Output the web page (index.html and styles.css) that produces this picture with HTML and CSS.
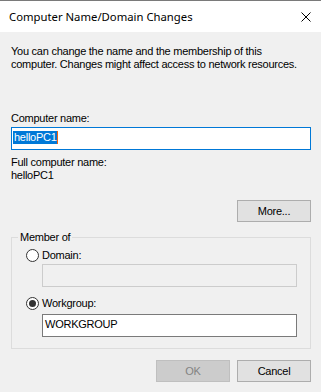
FILE: index.html
```html
<!DOCTYPE html>
<html>
<head>
<meta charset="utf-8">
<link rel="stylesheet" href="styles.css">
</head>
<body>
<div class="window">
  <div class="titlebar">
    <span class="title">Computer Name/Domain Changes</span>
    <svg class="close" width="10" height="10" viewBox="0 0 10 10"><path d="M0.5 0.5 L9.5 9.5 M9.5 0.5 L0.5 9.5" stroke="#000" stroke-width="1" fill="none"/></svg>
  </div>
  <div class="content">
    <p class="intro">You can change the name and the membership of this<br>computer. Changes might affect access to network resources.</p>
    <div class="label name-label">Computer name:</div>
    <div class="textbox focused"><span class="sel">helloPC1</span><span class="caret"></span></div>
    <div class="label full-label">Full computer name:</div>
    <div class="label full-value">helloPC1</div>
    <div class="btnrow more-row"><div class="btn">More...</div></div>
    <fieldset class="group">
      <legend>Member of</legend>
      <div class="group-inner">
        <div class="radio domain"><span class="circle"></span><span>Domain:</span></div>
        <div class="textbox disabled field-domain"></div>
        <div class="radio checked workgroup"><span class="circle"></span><span>Workgroup:</span></div>
        <div class="textbox field-workgroup">WORKGROUP</div>
      </div>
    </fieldset>
    <div class="btnrow actions"><div class="btn disabled">OK</div><div class="btn">Cancel</div></div>
  </div>
</div>
</body>
</html>
```

FILE: styles.css
```css
html, body {
  margin: 0;
  padding: 0;
  background: #f0f0f0;
}
.window {
  width: 321px;
  height: 392px;
  border-top: 1px solid #7a7a7a;
  box-sizing: border-box;
  background: #f0f0f0;
  font-family: "Liberation Sans", Arial, sans-serif;
  font-size: 11px;
  line-height: 13px;
  letter-spacing: -0.25px;
  color: #000;
}
.titlebar {
  height: 31px;
  background: #fff;
  display: flex;
  align-items: center;
  justify-content: space-between;
  padding: 1px 10px 0 9px;
  box-sizing: border-box;
}
.title {
  font-family: "Noto Sans", "Liberation Sans", sans-serif;
  font-size: 11.3px;
  letter-spacing: 0;
  line-height: 16px;
  color: #000;
}
.close {
  display: block;
  margin-top: -1px;
}
.content {
  padding: 13px 10px 0 11px;
}
.intro {
  margin: 0;
  white-space: nowrap;
}
.label {
  height: 13px;
  white-space: nowrap;
}
.name-label {
  margin-top: 41px;
}
.textbox {
  height: 23px;
  box-sizing: border-box;
  border: 1px solid #7a7a7a;
  background: #fff;
  padding: 3px 2px 0 2px;
  display: flex;
  align-items: flex-start;
}
.textbox.focused {
  margin-top: 2px;
  border-color: #0078d7;
  padding-left: 1px;
}
.sel {
  background: #0078d7;
  color: #fff;
  padding: 0 0 0 1px;
}
.caret {
  width: 1px;
  height: 13px;
  background: #f7630c;
}
.textbox.disabled {
  border-color: #cccccc;
  background: #f0f0f0;
}
.full-label {
  margin-top: 6px;
}
.full-value {
  margin-top: 0;
}
.btnrow {
  display: flex;
  justify-content: flex-end;
  gap: 7px;
}
.more-row {
  margin-top: 18px;
}
.btn {
  width: 74px;
  height: 22px;
  box-sizing: border-box;
  border: 1px solid #adadad;
  background: #e1e1e1;
  display: flex;
  align-items: center;
  justify-content: center;
}
.btn.disabled {
  background: #cccccc;
  border-color: #bfbfbf;
  color: #838383;
}
.group {
  margin: 9px 0 0 0;
  padding: 0 13px 11px 0;
  border: 1px solid #dcdcdc;
  min-width: 0;
}
.group legend {
  margin-left: 6px;
  padding: 0 2px;
  line-height: 13px;
}
.group-inner {
  padding-left: 14px;
}
.radio {
  display: flex;
  align-items: center;
  height: 13px;
  gap: 3px;
}
.radio.domain {
  margin-top: 5px;
}
.radio.workgroup {
  margin-top: 10px;
}
.circle {
  width: 13px;
  height: 13px;
  box-sizing: border-box;
  border: 1px solid #333;
  border-radius: 50%;
  background: #fff;
  display: flex;
  align-items: center;
  justify-content: center;
}
.radio.checked .circle::after {
  content: "";
  width: 7px;
  height: 7px;
  border-radius: 50%;
  background: #333;
}
.field-domain {
  margin: 2px 0 0 16px;
}
.field-workgroup {
  margin: 4px 0 0 16px;
}
.actions {
  margin-top: 11px;
}
```
